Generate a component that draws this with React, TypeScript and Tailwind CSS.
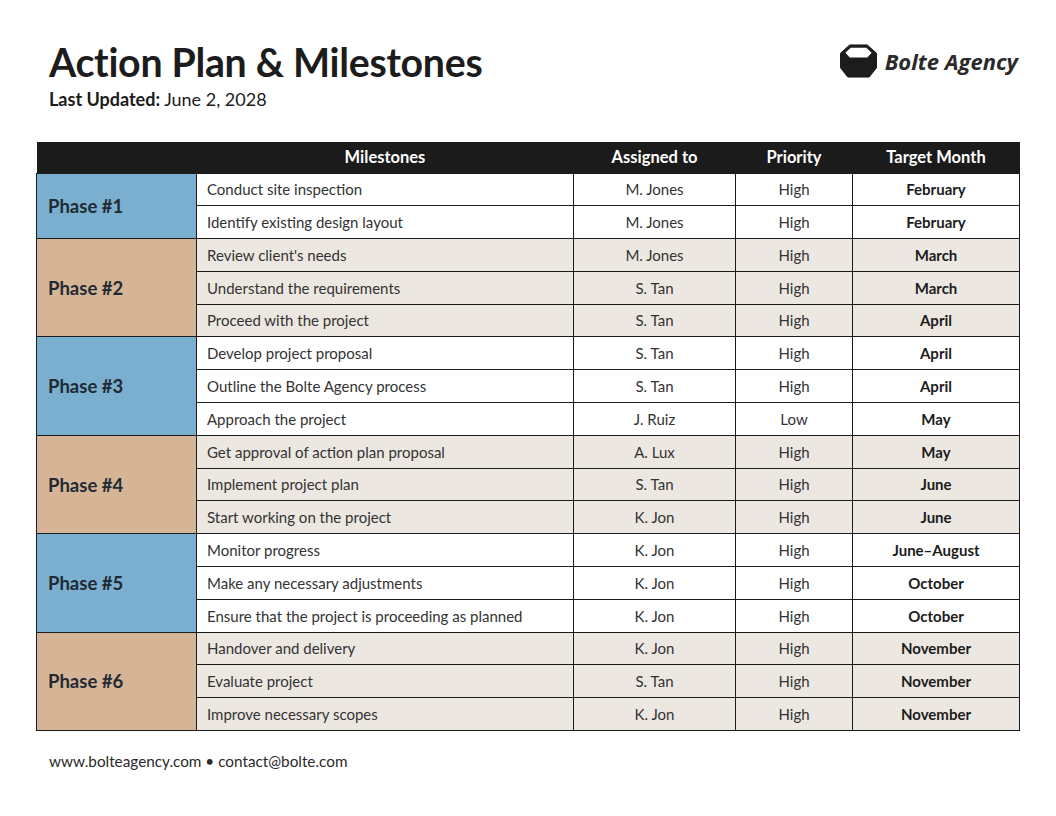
import React from "react";

type Row = { task: string; who: string; priority: string; month: string };
type Phase = { name: string; color: "blue" | "tan"; rows: Row[] };

const phases: Phase[] = [
  {
    name: "Phase #1",
    color: "blue",
    rows: [
      { task: "Conduct site inspection", who: "M. Jones", priority: "High", month: "February" },
      { task: "Identify existing design layout", who: "M. Jones", priority: "High", month: "February" },
    ],
  },
  {
    name: "Phase #2",
    color: "tan",
    rows: [
      { task: "Review client's needs", who: "M. Jones", priority: "High", month: "March" },
      { task: "Understand the requirements", who: "S. Tan", priority: "High", month: "March" },
      { task: "Proceed with the project", who: "S. Tan", priority: "High", month: "April" },
    ],
  },
  {
    name: "Phase #3",
    color: "blue",
    rows: [
      { task: "Develop project proposal", who: "S. Tan", priority: "High", month: "April" },
      { task: "Outline the Bolte Agency process", who: "S. Tan", priority: "High", month: "April" },
      { task: "Approach the project", who: "J. Ruiz", priority: "Low", month: "May" },
    ],
  },
  {
    name: "Phase #4",
    color: "tan",
    rows: [
      { task: "Get approval of action plan proposal", who: "A. Lux", priority: "High", month: "May" },
      { task: "Implement project plan", who: "S. Tan", priority: "High", month: "June" },
      { task: "Start working on the project", who: "K. Jon", priority: "High", month: "June" },
    ],
  },
  {
    name: "Phase #5",
    color: "blue",
    rows: [
      { task: "Monitor progress", who: "K. Jon", priority: "High", month: "June–August" },
      { task: "Make any necessary adjustments", who: "K. Jon", priority: "High", month: "October" },
      { task: "Ensure that the project is proceeding as planned", who: "K. Jon", priority: "High", month: "October" },
    ],
  },
  {
    name: "Phase #6",
    color: "tan",
    rows: [
      { task: "Handover and delivery", who: "K. Jon", priority: "High", month: "November" },
      { task: "Evaluate project", who: "S. Tan", priority: "High", month: "November" },
      { task: "Improve necessary scopes", who: "K. Jon", priority: "High", month: "November" },
    ],
  },
];

const Logo: React.FC = () => (
  <div className="flex items-center gap-[8px]">
    <svg width="37" height="34" viewBox="0 0 38 34">
      <path
        d="M10 0.5 H28 L37.5 9 V24 L30 33.5 H8 L0.5 24 V9 Z"
        fill="#1c1c1c"
        stroke="#1c1c1c"
        strokeWidth="1"
        strokeLinejoin="round"
      />
      <path d="M11 3.5 H27 L32.5 8.5 L28 13.5 H10 L5.5 8.5 Z" fill="#ffffff" />
    </svg>
    <span className="text-[22px] font-bold italic text-[#2a2a2a] font-['Open_Sans',sans-serif]">
      Bolte Agency
    </span>
  </div>
);

export default function App() {
  return (
    <div className="w-[1056px] h-[816px] bg-white font-['Lato',sans-serif] text-[#333333]">
      <div className="flex items-start justify-between pl-[49px] pr-[38px] pt-[39px]">
        <div>
          <h1 className="text-[39.3px] font-bold leading-[46px] text-[#1c1c1c] tracking-[-0.3px]">
            Action Plan &amp; Milestones
          </h1>
          <p className="text-[18px] leading-[24px] mt-[2px] text-[#1c1c1c]">
            <span className="font-bold">Last Updated:</span> June 2, 2028
          </p>
        </div>
        <div className="pt-[5px]">
          <Logo />
        </div>
      </div>

      <div className="pl-[36px] pt-[31px]">
        <table className="w-[984px] border-collapse text-[15px]">
          <colgroup>
            <col className="w-[160px]" />
            <col className="w-[377px]" />
            <col className="w-[162px]" />
            <col className="w-[117px]" />
            <col className="w-[167px]" />
          </colgroup>
          <thead>
            <tr className="h-[31px] bg-[#1b1b1b] text-white text-[16.5px]">
              <th></th>
              <th className="font-bold">Milestones</th>
              <th className="font-bold">Assigned to</th>
              <th className="font-bold">Priority</th>
              <th className="font-bold">Target Month</th>
            </tr>
          </thead>
          <tbody>
            {phases.map((phase) =>
              phase.rows.map((row, i) => (
                <tr
                  key={phase.name + i}
                  className={`h-[32.8px] ${phase.color === "tan" ? "bg-[#ede7e1]" : "bg-white"}`}
                >
                  {i === 0 && (
                    <td
                      rowSpan={phase.rows.length}
                      className={`border border-[#1b1b1b] pl-[11px] pt-[2px] text-[18.5px] font-bold text-[#1f2a33] ${
                        phase.color === "blue" ? "bg-[#7aafd0]" : "bg-[#d6b596]"
                      }`}
                    >
                      {phase.name}
                    </td>
                  )}
                  <td className="border border-[#1b1b1b] pl-[10px]">{row.task}</td>
                  <td className="border border-[#1b1b1b] text-center">{row.who}</td>
                  <td className="border border-[#1b1b1b] text-center">{row.priority}</td>
                  <td className="border border-[#1b1b1b] text-center font-bold text-[#1c1c1c]">
                    {row.month}
                  </td>
                </tr>
              ))
            )}
          </tbody>
        </table>
      </div>

      <p className="pl-[49px] pt-[19px] text-[15.3px] text-[#2a2a2a]">
        www.bolteagency.com • contact@bolte.com
      </p>
    </div>
  );
}
